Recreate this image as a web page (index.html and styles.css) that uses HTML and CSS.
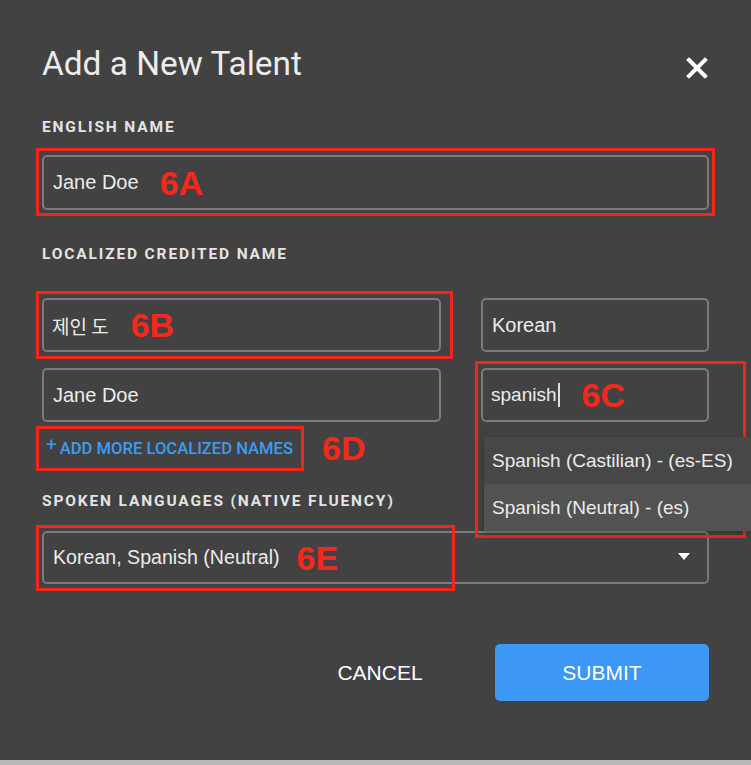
FILE: index.html
```html
<!DOCTYPE html>
<html>
<head>
<meta charset="utf-8">
<link rel="stylesheet" href="styles.css">
</head>
<body>
<div class="dialog">
  <div class="header">
    <h1 class="title">Add a New Talent</h1>
    <svg class="close" width="22" height="22" viewBox="0 0 22 22"><path d="M3 3 L19 19 M19 3 L3 19" stroke="#ffffff" stroke-width="4" stroke-linecap="square"/></svg>
  </div>

  <div class="label label-english">ENGLISH NAME</div>
  <div class="field field-english">
    <div class="input">Jane Doe<span class="tag tag-a">6A</span></div>
    <div class="mark mark-a"></div>
  </div>

  <div class="label label-localized">LOCALIZED CREDITED NAME</div>
  <div class="grid">
    <div class="field">
      <div class="input kr">제인 도<span class="tag tag-b">6B</span></div>
      <div class="mark mark-b"></div>
    </div>
    <div class="field">
      <div class="input">Korean</div>
    </div>
    <div class="col-left">
      <div class="field">
        <div class="input">Jane Doe</div>
      </div>
      <div class="add-row">
        <div class="add-more"><span class="plus">+</span>ADD MORE LOCALIZED NAMES<div class="mark mark-d"></div></div>
        <span class="tag tag-d">6D</span>
      </div>
    </div>
    <div class="field field-spanish">
      <div class="input spanish">spanish<span class="caret"></span><span class="tag tag-c">6C</span></div>
      <div class="menu">
        <div class="option">Spanish (Castilian) - (es-ES)</div>
        <div class="option option-hover">Spanish (Neutral) - (es)</div>
      </div>
      <div class="mark mark-c"></div>
    </div>
  </div>

  <div class="label label-spoken">SPOKEN LANGUAGES (NATIVE FLUENCY)</div>
  <div class="field field-select">
    <div class="input select">Korean, Spanish (Neutral)<span class="tag tag-e">6E</span>
      <svg class="arrow" width="12" height="7" viewBox="0 0 12 7"><path d="M0 0 L12 0 L6 7 Z" fill="#ffffff"/></svg>
    </div>
    <div class="mark mark-e"></div>
  </div>

  <div class="actions">
    <div class="btn-cancel">CANCEL</div>
    <div class="btn-submit">SUBMIT</div>
  </div>
</div>
</body>
</html>
```

FILE: styles.css
```css
html, body {
  margin: 0;
  padding: 0;
  background: #b9b9b9;
}
.dialog {
  box-sizing: border-box;
  width: 751px;
  height: 760px;
  background: #424242;
  padding: 0 42px 0 42px;
  display: flex;
  flex-direction: column;
  font-family: "Liberation Sans", Arial, sans-serif;
  color: #ededed;
  overflow: hidden;
}
.header {
  display: flex;
  justify-content: space-between;
  align-items: center;
  height: 118px;
  padding-top: 12px;
  box-sizing: border-box;
}
.title {
  margin: 0;
  margin-top: -3px;
  font-family: Roboto, "Liberation Sans", sans-serif;
  font-weight: 400;
  font-size: 33.4px;
  color: #ececec;
}
.close {
  margin-top: 5px;
  margin-right: 1px;
}
.label {
  font-family: Roboto, "Liberation Sans", sans-serif;
  font-weight: 700;
  font-size: 15.5px;
  letter-spacing: 1.85px;
  color: #e4e4e4;
  line-height: 18px;
}
.label-english { margin-top: 0; }
.label-localized { margin-top: 35px; }
.label-spoken { margin-top: 32px; }
.field {
  position: relative;
}
.field-english { margin-top: 19px; }
.input {
  box-sizing: border-box;
  height: 55px;
  border: 2px solid #7b7b7b;
  border-radius: 5px;
  display: flex;
  align-items: center;
  padding-left: 9px;
  font-size: 20px;
  color: #ececec;
  position: relative;
}
.kr {
  font-family: "Noto Sans CJK KR", "Liberation Sans", sans-serif;
  font-size: 19px;
  padding-left: 8px;
}
.spanish { font-size: 19px; padding-left: 8px; }
.select { height: 53px; font-size: 19.6px; }
.tag {
  font-family: "Liberation Sans", Arial, sans-serif;
  font-weight: 700;
  font-size: 34px;
  color: #f5281c;
  margin-left: 21px;
  line-height: 1;
}
.tag-b { margin-left: 22px; }
.tag-c { margin-left: 22px; }
.tag-e { margin-left: 17px; }
.mark {
  position: absolute;
  border: 3px solid #f0261b;
  pointer-events: none;
}
.mark-a { left: -6px; right: -6px; top: -7px; bottom: -6px; }
.mark-b { left: -6px; right: -12px; top: -7px; bottom: -7px; }
.mark-c { left: -6px; right: -37px; top: -7px; bottom: -116px; }
.mark-d { left: -10px; right: -11px; top: -11px; bottom: -11px; }
.mark-e { left: -6px; right: 254px; top: -6px; bottom: -7px; }
.grid {
  margin-top: 35px;
  display: grid;
  grid-template-columns: 399px 228px;
  column-gap: 40px;
  row-gap: 16px;
  align-items: start;
}
.grid .input { height: 54px; }
.col-left {
  display: flex;
  flex-direction: column;
}
.add-row {
  display: flex;
  align-items: center;
  margin-top: 14px;
  height: 24px;
}
.add-more {
  position: relative;
  margin-left: 4px;
  font-family: Roboto, "Liberation Sans", sans-serif;
  font-weight: 500;
  font-size: 16.6px;
  color: #3d9bf5;
  display: flex;
  align-items: center;
}
.plus {
  font-size: 19px;
  font-weight: 400;
  margin-right: 3px;
  position: relative;
  top: -4px;
}
.tag-d { margin-left: 29px; }
.caret {
  display: inline-block;
  width: 2px;
  height: 24px;
  background: #e0e0e0;
  margin-left: 1px;
}
.menu {
  position: absolute;
  left: 3px;
  top: 69px;
  width: 270px;
  z-index: 2;
  background: #474747;
  box-shadow: 0 2px 6px rgba(0,0,0,0.25);
}
.option {
  height: 47px;
  display: flex;
  align-items: center;
  padding-left: 8px;
  font-size: 19px;
  color: #ececec;
  white-space: nowrap;
}
.option-hover { background: #525252; }
.field-spanish { z-index: 2; }
.field-select { margin-top: 21px; }
.arrow {
  position: absolute;
  right: 17px;
  top: 20px;
}
.actions {
  display: flex;
  justify-content: flex-end;
  align-items: center;
  margin-top: 60px;
}
.btn-cancel {
  width: 150px;
  margin-right: 40px;
  text-align: center;
  font-size: 21px;
  color: #ffffff;
}
.btn-submit {
  width: 214px;
  height: 57px;
  background: #3d97f5;
  border-radius: 5px;
  display: flex;
  align-items: center;
  justify-content: center;
  font-size: 21px;
  color: #ffffff;
}
```
